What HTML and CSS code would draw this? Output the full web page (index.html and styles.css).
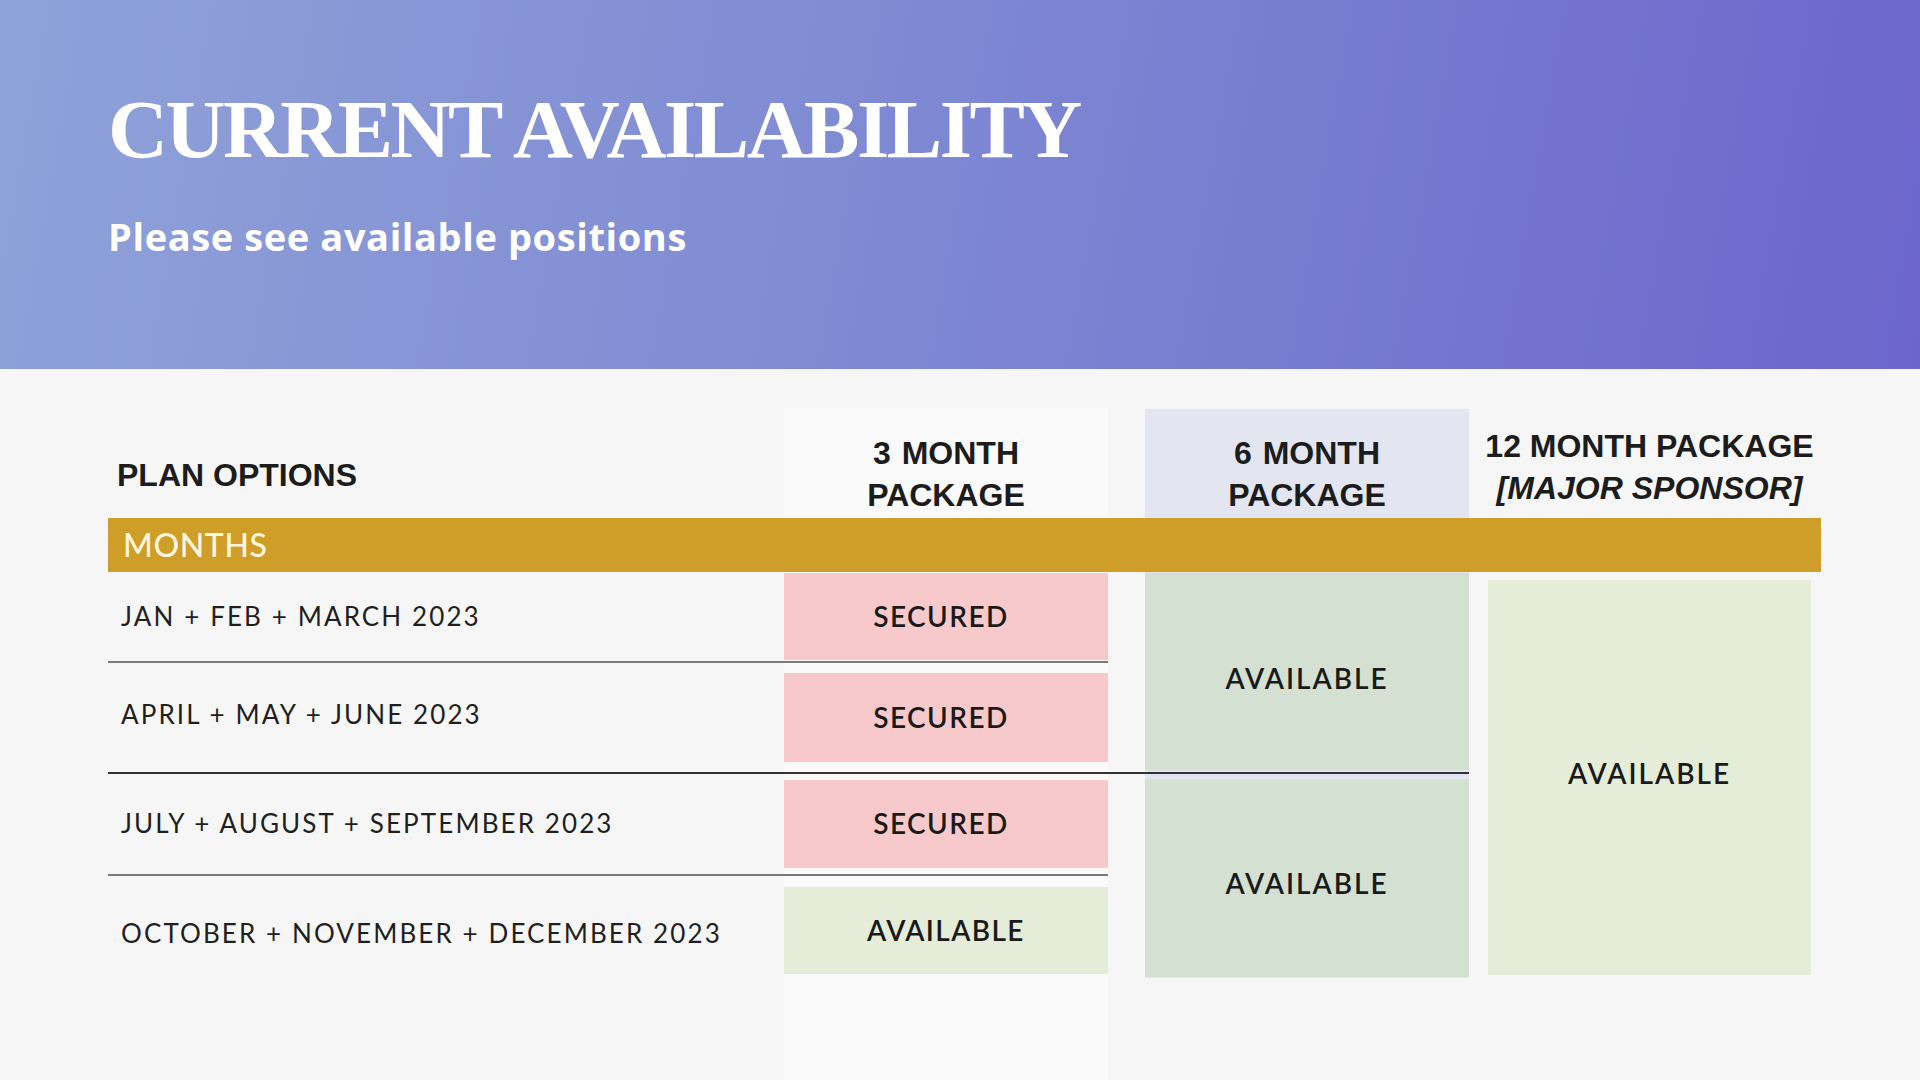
FILE: index.html
```html
<!DOCTYPE html>
<html lang="en">
<head>
<meta charset="utf-8">
<title>Current Availability</title>
<link rel="stylesheet" href="styles.css">
</head>
<body>
<header class="hero">
  <h1 class="hero-title">CURRENT AVAILABILITY</h1>
  <p class="hero-sub">Please see available positions</p>
</header>
<main class="content">
  <div class="grid">
    <div class="col-bg col-bg-3"></div>
    <div class="col-bg col-bg-6"></div>

    <div class="head head-plan">PLAN OPTIONS</div>
    <div class="head head-3">3 MONTH<br>PACKAGE</div>
    <div class="head head-6">6 MONTH<br>PACKAGE</div>
    <div class="head head-12">12 MONTH PACKAGE<br><em>[MAJOR SPONSOR]</em></div>

    <div class="bar">MONTHS</div>

    <div class="label label-1">JAN + FEB + MARCH 2023</div>
    <div class="label label-2">APRIL + MAY + JUNE 2023</div>
    <div class="label label-3">JULY + AUGUST + SEPTEMBER 2023</div>
    <div class="label label-4">OCTOBER + NOVEMBER + DECEMBER 2023</div>

    <div class="cell secured q-1">SECURED</div>
    <div class="cell secured q-2">SECURED</div>
    <div class="cell secured q-3">SECURED</div>
    <div class="cell open q-4">AVAILABLE</div>

    <div class="rule rule-1"></div>
    <div class="rule rule-2"></div>
    <div class="rule rule-3"></div>

    <div class="cell half half-1">AVAILABLE</div>
    <div class="cell half half-2">AVAILABLE</div>

    <div class="cell open year">AVAILABLE</div>
  </div>
</main>
</body>
</html>
```

FILE: styles.css
```css
html, body {
  margin: 0;
  padding: 0;
}

body {
  width: 1920px;
  height: 1080px;
  overflow: hidden;
  background: #f6f6f6;
  font-family: "Lato", "Open Sans", sans-serif;
  color: #1e1e1e;
}

.hero {
  box-sizing: border-box;
  height: 369px;
  padding: 88px 0 0 108px;
  background: linear-gradient(100deg, #8fa2d9 0%, #7f8ad3 45%, #6c66cc 100%);
  color: #ffffff;
}

.hero-title {
  margin: 0;
  font-family: "Liberation Serif", "Times New Roman", serif;
  font-weight: 700;
  font-size: 83px;
  line-height: 83px;
  letter-spacing: -2.5px;
}

.hero-sub {
  margin: 43px 0 0;
  font-family: "Open Sans", "Lato", sans-serif;
  font-weight: 700;
  font-size: 38px;
  line-height: 1.2;
  letter-spacing: 0.6px;
}

.content {
  padding: 39px 0 0 108px;
}

.grid {
  display: grid;
  grid-template-columns: 676px 324px 37px 324px 19px 323px 10px;
  grid-template-rows: 110px 54px 89px 2px 109px 2px 100px 2px 102px 102px;
}

.col-bg-3 {
  grid-column: 2;
  grid-row: 1 / 11;
  background: #fafafa;
}

.col-bg-6 {
  grid-column: 4;
  grid-row: 1 / 10;
  margin-top: 1px;
  background: #e3e6f0;
}

.head {
  font-family: "Liberation Sans", Arial, sans-serif;
  font-weight: 700;
  font-size: 32px;
  line-height: 41.5px;
  color: #1c1c1c;
  text-align: center;
  align-self: end;
}

.head em {
  font-style: italic;
}

.head-plan {
  grid-column: 1;
  grid-row: 1;
  text-align: left;
  padding-left: 9px;
  margin-bottom: 22px;
}

.head-3 {
  grid-column: 2;
  grid-row: 1;
  margin-bottom: 2px;
  word-spacing: 2px;
}

.head-6 {
  grid-column: 4;
  grid-row: 1;
  margin-bottom: 2px;
  word-spacing: 2px;
}

.head-12 {
  grid-column: 5 / 8;
  grid-row: 1;
  padding-left: 9px;
  margin-bottom: 9px;
}

.bar {
  grid-column: 1 / 8;
  grid-row: 2;
  background: #ce9e28;
  color: #fff6df;
  font-weight: 500;
  font-size: 32px;
  line-height: 54px;
  letter-spacing: 0.6px;
  padding-left: 15px;
}

.label {
  grid-column: 1;
  display: flex;
  align-items: center;
  padding-left: 13px;
  font-size: 26px;
  line-height: 1.2;
  letter-spacing: 2.1px;
  color: #1f1f1f;
}

.label-1 { grid-row: 3; }
.label-2 { grid-row: 5; padding-bottom: 6px; }
.label-3 { grid-row: 7; }
.label-4 { grid-row: 9; padding-top: 13px; }

.cell {
  display: flex;
  align-items: center;
  justify-content: center;
  font-weight: 600;
  font-size: 28px;
  line-height: 1.2;
  letter-spacing: 1.4px;
  color: #1a1a1a;
}

.secured {
  background: #f8c9cb;
  padding-right: 10px;
}

.open {
  background: #e5edd8;
}

.half,
.year {
  letter-spacing: 2px;
}

.q-1 { grid-column: 2; grid-row: 3; margin: 1px 0; }
.q-2 { grid-column: 2; grid-row: 5; margin: 10px 0; }
.q-3 { grid-column: 2; grid-row: 7; margin: 6px 0; }
.q-4 { grid-column: 2; grid-row: 9; margin: 11px 0 4px; }

.rule-1 { grid-column: 1 / 3; grid-row: 4; background: #7b7b7b; }
.rule-2 { grid-column: 1 / 5; grid-row: 6; background: #333333; }
.rule-3 { grid-column: 1 / 3; grid-row: 8; background: #7b7b7b; }

.half {
  background: #d4e0d1;
  grid-column: 4;
}

.half-1 { grid-row: 3 / 6; margin: 1px 0 2px; padding-top: 14px; }
.half-2 { grid-row: 7 / 10; margin: 5px 0 1px; padding-top: 12px; }

.year {
  grid-column: 6;
  grid-row: 3 / 10;
  margin: 8px 0 3px;
  padding-bottom: 8px;
}
```
